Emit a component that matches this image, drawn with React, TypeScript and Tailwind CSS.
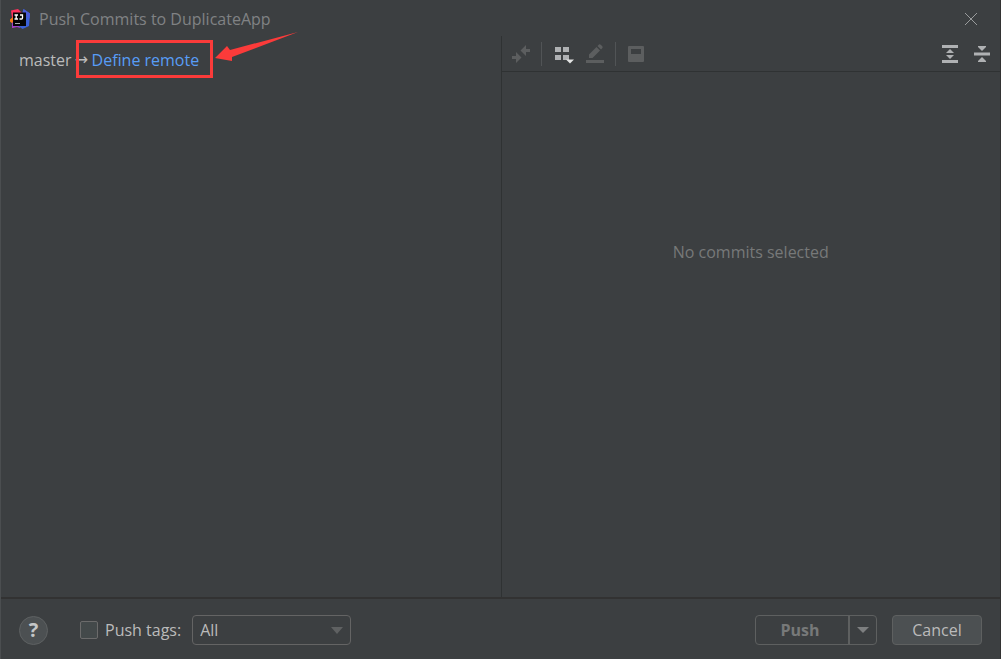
import type { ReactNode } from "react";

function AppLogo() {
  return (
    <svg width="20" height="20" viewBox="0 0 20 20" aria-hidden="true">
      <path d="M1 1.500 8 0l4 4-2 12-8 3 1-5-3-2 2-3z" fill="#fe315d" />
      <path d="M0 10.500 3 8v7l-3-2.500z" fill="#f97a12" />
      <path d="M2 13.500 9 14l1 5-3-1-5 1z" fill="#a23fc8" />
      <path d="M13.500 0 20 4.500 19 17l-6.500 3L7 16l6-10z" fill="#3b62d8" />
      <path d="M13.500 0 20 4.500l-.5 5L12 5z" fill="#4a5cd8" />
      <path d="M3 3.500h13V17H3z" fill="#050505" />
      <path
        d="M4.500 6h3.500M6.200 6v4M4.500 10h3.500M10 6h2.500v3q0 1-1 1H9.500"
        fill="none"
        stroke="#fff"
        strokeWidth="1.300"
      />
      <path d="M5 14.500h5" stroke="#aaa" strokeWidth="1" />
    </svg>
  );
}

interface ToolButtonProps {
  label: string;
  disabled?: boolean;
  children: ReactNode;
}

function ToolButton({ label, disabled, children }: ToolButtonProps) {
  return (
    <button
      aria-label={label}
      disabled={disabled}
      className="size-5 flex items-center justify-center text-[#afb1b3] disabled:text-[#5c5e5f]"
    >
      <svg width="20" height="20" viewBox="0 0 20 20" fill="currentColor">
        {children}
      </svg>
    </button>
  );
}

function Toolbar() {
  return (
    <div className="h-9 flex items-center pl-[9px] pr-2 border-b border-[#2f3233]">
      <ToolButton label="Show diff" disabled>
        <path d="M9.500 6.500 15 1v4h4v3h-4v4zM1 12h4V8l5.500 5.500L5 19v-4H1z" />
      </ToolButton>
      <div className="w-px h-6 bg-[#515456] ml-2.5 mr-3" />
      <ToolButton label="Group by">
        <path d="M1 3h6v5H1zM9 3h6v5H9zM1 11h6v5H1zM9 11h6v5H9z" />
        <path d="M12 15.500h8L16 19.500z" fill="#e4e4e4" />
      </ToolButton>
      <div className="w-[11px]" />
      <ToolButton label="Edit" disabled>
        <path d="M1 16h18v3H1zM4 14v-3.500l7.500-7.500L15 6.500 7.500 14zM12.500 2l1.500-1.500q1-.5 2 .5l1.500 1.500q.5 1-.5 2L16 5.500z" />
      </ToolButton>
      <div className="w-px h-6 bg-[#515456] mx-2.5" />
      <ToolButton label="Preview diff" disabled>
        <path
          fillRule="evenodd"
          d="M3 2h14q1 0 1 1v14q0 1-1 1H3q-1 0-1-1V3q0-1 1-1zM5 5v5h10V5z"
        />
      </ToolButton>
      <div className="ml-auto flex gap-3">
        <ToolButton label="Expand all">
          <path d="M2 1h16v3H2zM2 16h16v3H2zM10 5l4 4H6zM10 15l-4-4h8z" />
        </ToolButton>
        <ToolButton label="Collapse all">
          <path d="M2 8.500h16v3H2zM6 2h8v1l-4 4-4-4zM10 13l4 4v1H6v-1z" />
        </ToolButton>
      </div>
    </div>
  );
}

// red frame and arrow pointing at the link
function Callout() {
  return (
    <>
      <span className="absolute -left-4 -right-3.5 -top-2 -bottom-1.5 border-3 border-[#fb3b3a] pointer-events-none" />
      <svg
        className="absolute left-full -top-4 ml-4 pointer-events-none"
        width="84"
        height="30"
        viewBox="0 0 84 30"
        aria-hidden="true"
      >
        <path d="M0 26 12 14l3 4L83 0 17 25v4z" fill="#fb3b3a" />
      </svg>
    </>
  );
}

export default function App() {
  return (
    <div className="min-h-screen flex flex-col bg-[#3c3f41] border-l border-l-[#4b4e50] border-r border-r-[#333333] text-[#bbbbbb] text-base leading-6 font-['Open_Sans','Noto_Sans',sans-serif]">
      <header className="h-9 flex items-center gap-[9px] pl-[9px] pr-5 pt-0.5">
        <AppLogo />
        <h1 className="text-[#808284]">Push Commits to DuplicateApp</h1>
        <button aria-label="Close" className="ml-auto text-[#9a9c9d]">
          <svg width="18" height="18" viewBox="0 0 18 18" fill="none" stroke="currentColor">
            <path d="m3 3 12 12M15 3 3 15" />
          </svg>
        </button>
      </header>

      <main className="flex-1 grid grid-cols-2">
        <section className="flex items-start pl-[18px] pt-3">
          <span>master</span>
          <span className="w-5 text-center font-['DejaVu_Sans',sans-serif]">→</span>
          <span className="relative">
            <a href="#remote" className="text-[#589df6]">
              Define remote
            </a>
            <Callout />
          </span>
        </section>

        <section className="flex flex-col border-l border-[#2f3233]">
          <Toolbar />
          <p className="pt-42 text-center text-[#777979]">No commits selected</p>
        </section>
      </main>

      <footer className="flex items-center px-[18px] pt-4 pb-3.5 border-t-2 border-[#323232]">
        <button
          aria-label="Help"
          className="size-[29px] rounded-full border border-[#5e6162] bg-[#4c5052] text-xl leading-none font-bold text-[#c4c6c7]"
        >
          ?
        </button>
        <input
          id="push-tags"
          type="checkbox"
          className="appearance-none size-[18px] ml-8 rounded-xs border border-[#6b6b6b] bg-[#43494a]"
        />
        <label htmlFor="push-tags" className="ml-[7px]">
          Push tags:
        </label>
        <div className="relative ml-[11px]">
          <select
            aria-label="Tags to push"
            className="appearance-none block w-[159px] h-[30px] pl-[7px] rounded-sm border border-[#646464] bg-[#3c3f41]"
          >
            <option>All</option>
            <option>Current Branch</option>
          </select>
          <svg
            className="absolute right-2 top-3 pointer-events-none"
            width="12"
            height="7"
            viewBox="0 0 12 7"
            fill="#5f6162"
          >
            <path d="M0 0h12L6 7z" />
          </svg>
        </div>

        <div className="ml-auto flex h-[30px] rounded-sm border border-[#5e6060] text-[#777979]">
          <button disabled className="w-[92px] pr-1 font-bold leading-7">
            Push
          </button>
          <button
            disabled
            aria-label="More push options"
            className="w-7 flex items-center justify-center border-l-2 border-[#5e6060]"
          >
            <svg width="12" height="6" viewBox="0 0 12 6" fill="#7d7f80">
              <path d="M0 0h12L6 6z" />
            </svg>
          </button>
        </div>
        <button className="w-[90px] h-[30px] ml-[15px] rounded-sm border border-[#5e6060] bg-[#4c5052] leading-7">
          Cancel
        </button>
      </footer>
    </div>
  );
}
